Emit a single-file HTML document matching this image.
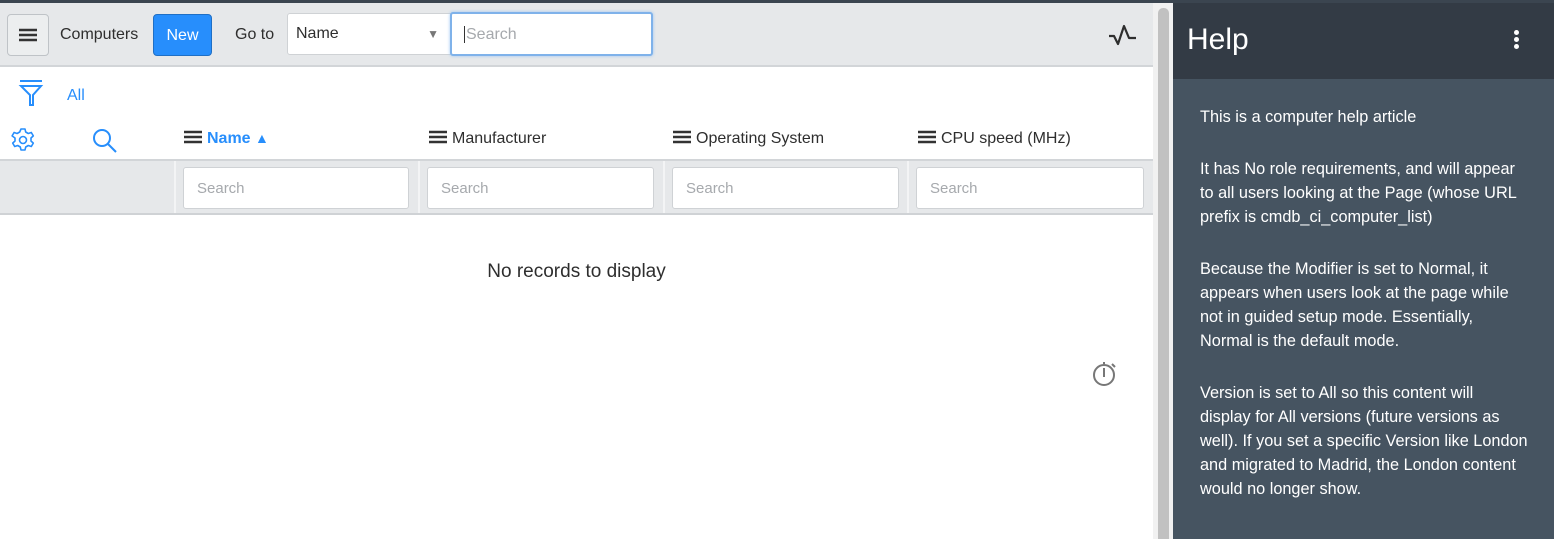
<!DOCTYPE html>
<html><head><style>
*{box-sizing:border-box;margin:0;padding:0}
body{width:1554px;height:539px;overflow:hidden;background:#fff;font-family:"Liberation Sans",sans-serif;position:relative;color:#2e2e2e}
.abs{position:absolute}
.top{left:0;top:0;width:1554px;height:3px;background:#3b4550}
.bar{left:0;top:3px;width:1153px;height:64px;background:#e6e8ea;border-bottom:2px solid #d2d5d8}
.btn{border:1px solid #bfc3c7;border-radius:4px;background:#eceeef}
.inp{background:#fff;border:1px solid #cfd2d5;border-radius:3px;font-size:15px;color:#a6a9ad;padding-left:13px;line-height:42px}
.hdr{font-size:16px;top:130px;white-space:nowrap}
.ham{display:inline-block;width:18px;height:14px;vertical-align:middle;margin-right:5px;position:relative;top:-2px}
.help p{margin-bottom:28px;white-space:nowrap}
</style></head><body>
<div class="abs top"></div>
<div class="abs bar"></div>
<div class="abs btn" style="left:7px;top:14px;width:42px;height:42px"></div>
<svg class="abs" style="left:19px;top:28px" width="18" height="14"><path d="M0 2h18M0 7h18M0 12h18" stroke="#333" stroke-width="2.6"/></svg>
<div class="abs" style="left:60px;top:26px;font-size:16px">Computers</div>
<div class="abs" style="left:153px;top:14px;width:59px;height:42px;background:#278efc;border:1px solid #1f6fc5;border-radius:4px;color:#fff;font-size:16px;text-align:center;line-height:42px">New</div>
<div class="abs" style="left:235px;top:26px;font-size:16px">Go to</div>
<div class="abs inp" style="left:287px;top:13px;width:165px;height:42px;color:#2e2e2e;padding-left:8px;border-radius:3px 0 0 3px;font-size:16px;line-height:40px">Name<span style="position:absolute;right:12px;top:0;font-size:12px;color:#777">▼</span></div>
<div class="abs inp" style="left:450px;top:12px;width:203px;height:44px;border:2px solid #7fb2ea;box-shadow:0 0 3px #9cc6f3;line-height:42px;padding-left:12px;font-size:16px"><span style="border-left:1px solid #333;padding-left:1px">Search</span></div>
<svg class="abs" style="left:1108px;top:22px" width="30" height="26" viewBox="0 0 30 26"><path d="M1 14h5l4 8 6-18 5 12h7" fill="none" stroke="#2e2e2e" stroke-width="2.2" stroke-linejoin="round"/></svg>
<svg class="abs" style="left:18px;top:79px" width="28" height="28" viewBox="0 0 28 28"><path d="M2 2h22M3 7h20L15 16v10h-3V16Z" fill="none" stroke="#278efc" stroke-width="2"/></svg>
<div class="abs" style="left:67px;top:87px;font-size:16px;color:#278efc">All</div>
<svg class="abs" style="left:10px;top:127px" width="26" height="26" viewBox="0 0 26 26"><circle cx="13" cy="13" r="3.5" fill="none" stroke="#278efc" stroke-width="1.6"/><path d="M11 2h4l.7 3 2.6 1.5 3-1 2 3.4-2.3 2.1v3l2.3 2.1-2 3.4-3-1-2.6 1.5-.7 3h-4l-.7-3-2.6-1.5-3 1-2-3.4 2.3-2.1v-3L2.1 8.9l2-3.4 3 1L9.7 5Z" fill="none" stroke="#278efc" stroke-width="1.6" stroke-linejoin="round"/></svg>
<svg class="abs" style="left:91px;top:127px" width="28" height="28" viewBox="0 0 28 28"><circle cx="11" cy="11" r="8" fill="none" stroke="#278efc" stroke-width="2"/><path d="M17 17l8 8" stroke="#278efc" stroke-width="2"/></svg>
<div class="abs hdr" style="left:184px;color:#278efc;font-weight:bold"><svg class="ham"><path d="M0 2h18M0 7h18M0 12h18" stroke="#333" stroke-width="2.6"/></svg>Name <span style="font-size:14px">▲</span></div>
<div class="abs hdr" style="left:429px"><svg class="ham"><path d="M0 2h18M0 7h18M0 12h18" stroke="#333" stroke-width="2.6"/></svg>Manufacturer</div>
<div class="abs hdr" style="left:673px"><svg class="ham"><path d="M0 2h18M0 7h18M0 12h18" stroke="#333" stroke-width="2.6"/></svg>Operating System</div>
<div class="abs hdr" style="left:918px"><svg class="ham"><path d="M0 2h18M0 7h18M0 12h18" stroke="#333" stroke-width="2.6"/></svg>CPU speed (MHz)</div>
<div class="abs" style="left:0;top:159px;width:1153px;height:56px;background:#e6e8ea;border-top:2px solid #d2d5d8;border-bottom:2px solid #cfd2d5"></div>
<div class="abs" style="left:174px;top:161px;width:2px;height:52px;background:#f3f4f5"></div>
<div class="abs" style="left:418px;top:161px;width:2px;height:52px;background:#f3f4f5"></div>
<div class="abs" style="left:663px;top:161px;width:2px;height:52px;background:#f3f4f5"></div>
<div class="abs" style="left:907px;top:161px;width:2px;height:52px;background:#f3f4f5"></div>
<div class="abs inp" style="left:183px;top:167px;width:226px;height:42px">Search</div>
<div class="abs inp" style="left:427px;top:167px;width:227px;height:42px">Search</div>
<div class="abs inp" style="left:672px;top:167px;width:227px;height:42px">Search</div>
<div class="abs inp" style="left:916px;top:167px;width:228px;height:42px">Search</div>
<div class="abs" style="left:0;width:1153px;top:261px;text-align:center;font-size:19px;color:#2e2e2e">No records to display</div>
<svg class="abs" style="left:1091px;top:359px" width="28" height="30" viewBox="0 0 28 30"><circle cx="13" cy="16" r="10" fill="none" stroke="#777" stroke-width="2"/><path d="M13 3v2M13 9v9" stroke="#777" stroke-width="2"/><path d="M21 5l3 3" stroke="#777" stroke-width="2"/></svg>
<div class="abs" style="left:1153px;top:3px;width:20px;height:536px;background:#f1f1f1"></div>
<div class="abs" style="left:1158px;top:8px;width:11px;height:531px;background:#c1c1c1;border-radius:5px 5px 0 0"></div>
<div class="abs" style="left:1173px;top:3px;width:381px;height:76px;background:#333b45"></div>
<div class="abs" style="left:1187px;top:23px;font-size:30px;color:#fff">Help</div>
<div class="abs" style="left:1514px;top:30px;width:5px;height:5px;border-radius:50%;background:#fff;box-shadow:0 7px 0 #fff,0 14px 0 #fff"></div>
<div class="abs help" style="left:1173px;top:79px;width:381px;height:460px;background:#465461;color:#fff;font-size:16.3px;line-height:24px;padding:26px 5px 0 27px">
<p>This is a computer help article</p>
<p>It has No role requirements, and will appear<br>to all users looking at the Page (whose URL<br>prefix is cmdb_ci_computer_list)</p>
<p>Because the Modifier is set to Normal, it<br>appears when users look at the page while<br>not in guided setup mode. Essentially,<br>Normal is the default mode.</p>
<p>Version is set to All so this content will<br>display for All versions (future versions as<br>well). If you set a specific Version like London<br>and migrated to Madrid, the London content<br>would no longer show.</p>
</div>
</body></html>
